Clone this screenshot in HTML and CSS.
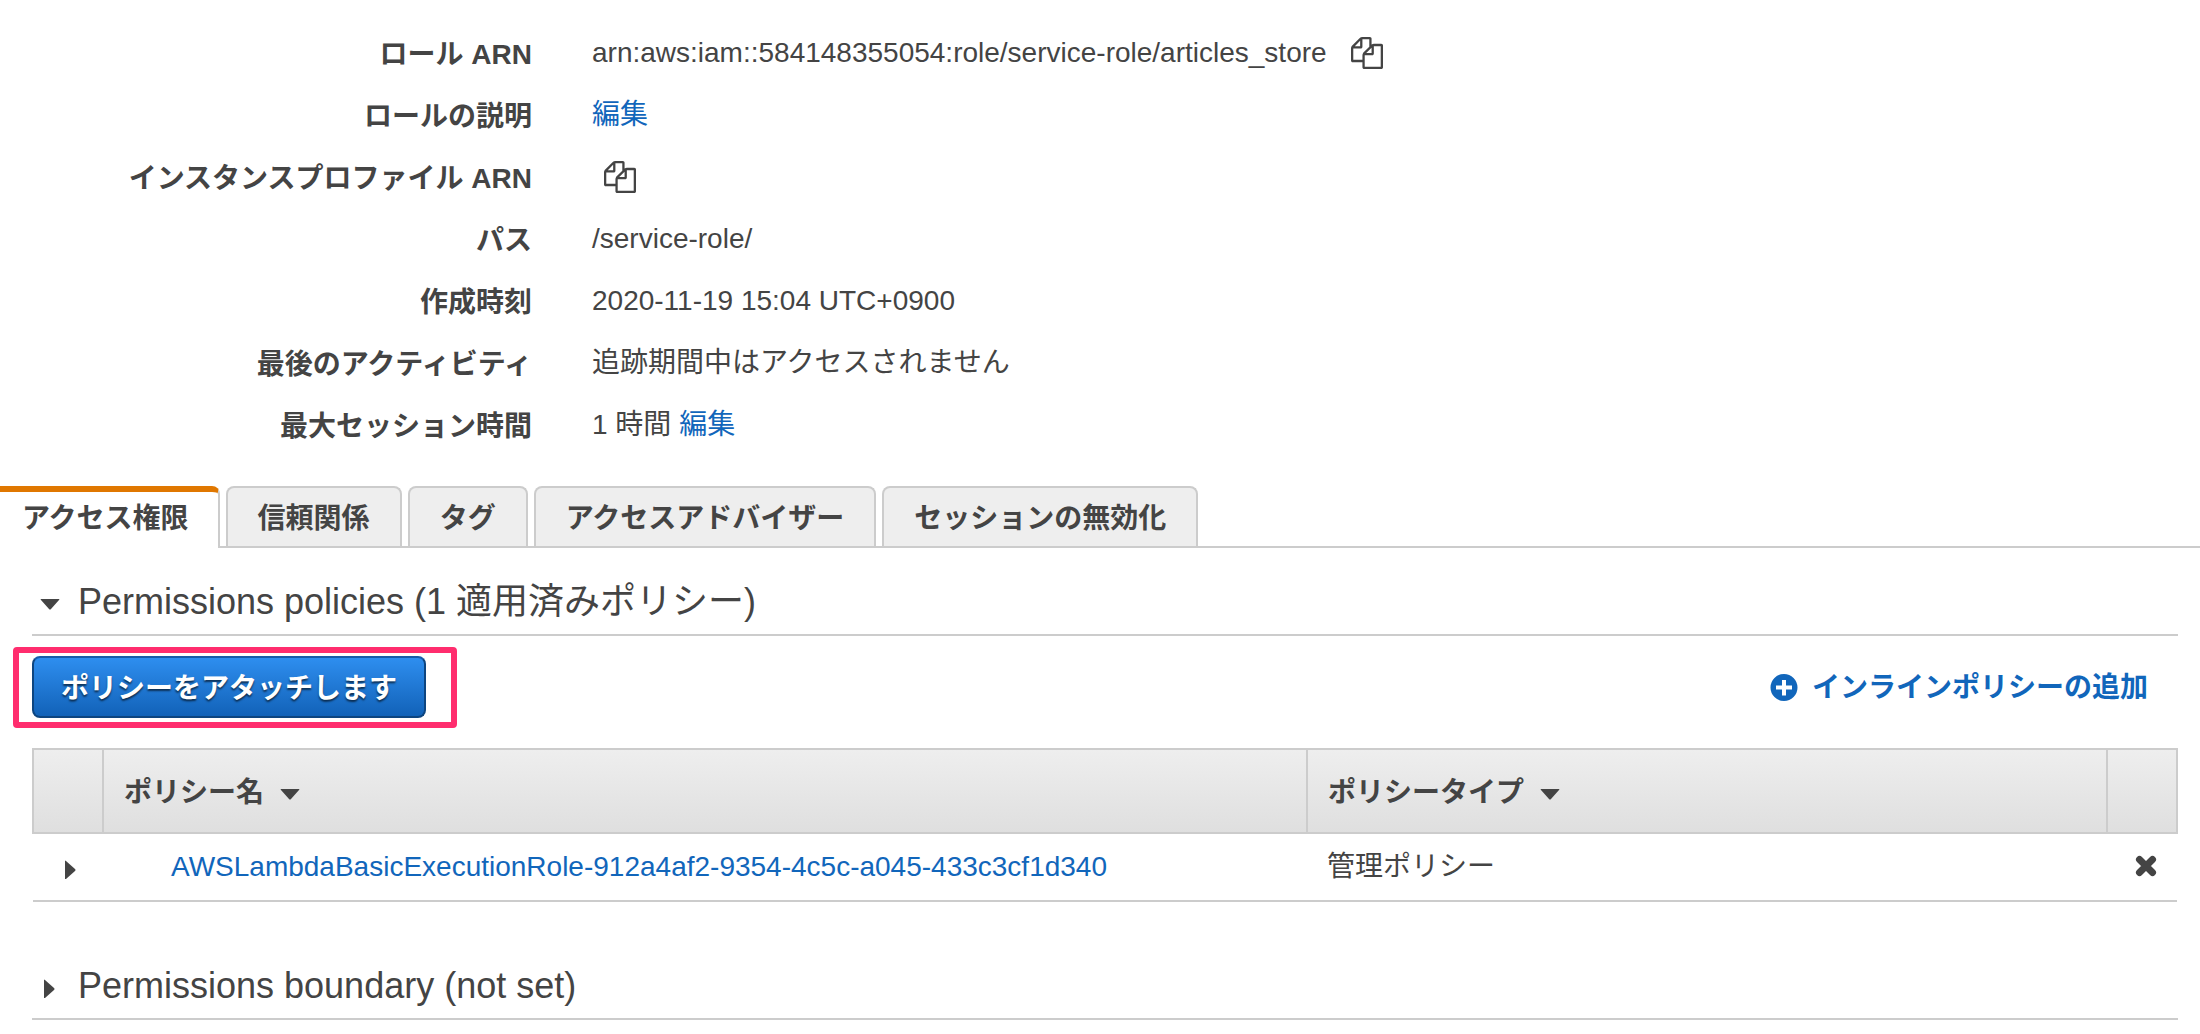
FILE: index.html
```html
<!DOCTYPE html>
<html lang="ja">
<head>
  <meta charset="UTF-8">
  <meta name="viewport" content="width=device-width, initial-scale=1.0">
  <title>IAM ロール</title>
  <link rel="stylesheet" href="styles.css">
</head>
<body>
  <!-- Shared icon shapes -->
  <svg class="icon-defs" aria-hidden="true">
    <symbol id="icon-copy" viewBox="0 0 1792 1792">
      <path d="M1696 384q40 0 68 28t28 68v1216q0 40-28 68t-68 28h-960q-40 0-68-28t-28-68v-288h-544q-40 0-68-28t-28-68v-672q0-40 20-88t48-76l408-408q28-28 76-48t88-20h416q40 0 68 28t28 68v328q68-40 128-40h416zm-544 213l-299 299h299v-299zm-640-384l-299 299h299v-299zm196 647l316-316v-416h-384v416q0 40-28 68t-68 28h-416v640h512v-256q0-40 20-88t48-76zm956 804v-1152h-384v416q0 40-28 68t-68 28h-416v640h896z"/>
    </symbol>
    <symbol id="icon-down" viewBox="0 0 20 20">
      <path d="M1 5h18q1 0 0 1l-8 9q-1 1-2 0l-8-9q-1-1 0-1z"/>
    </symbol>
    <symbol id="icon-right" viewBox="0 0 20 20">
      <path d="M4 2q0-1 1 0l9 8q1 1 0 2l-9 8q-1 1-1 0z"/>
    </symbol>
    <symbol id="icon-plus" viewBox="0 0 28 28">
      <path fill-rule="evenodd" d="M14 0a13.5 13.5 0 1 0 0 27a13.5 13.5 0 1 0 0-27zM12 6h4v5.500h6v4h-6v6h-4v-6h-6v-4h6z"/>
    </symbol>
    <symbol id="icon-close" viewBox="0 0 22 22">
      <path d="M4.500 4.500L17.500 17.500M17.500 4.500L4.500 17.500" stroke="currentColor" stroke-width="7" stroke-linecap="round"/>
    </symbol>
  </svg>

  <!-- Role summary -->
  <dl class="summary">
    <dt>ロール ARN</dt>
    <dd>arn:aws:iam::584148355054:role/service-role/articles_store
      <button class="icon-button" aria-label="コピー"><svg class="icon-copy"><use href="#icon-copy"/></svg></button>
    </dd>
    <dt>ロールの説明</dt>
    <dd><a href="#">編集</a></dd>
    <dt>インスタンスプロファイル ARN</dt>
    <dd><button class="icon-button" aria-label="コピー"><svg class="icon-copy"><use href="#icon-copy"/></svg></button></dd>
    <dt>パス</dt>
    <dd>/service-role/</dd>
    <dt>作成時刻</dt>
    <dd>2020-11-19 15:04 UTC+0900</dd>
    <dt>最後のアクティビティ</dt>
    <dd>追跡期間中はアクセスされません</dd>
    <dt>最大セッション時間</dt>
    <dd><span>1 時間 <a href="#">編集</a></span></dd>
  </dl>

  <!-- Tabs -->
  <div class="tabs" role="tablist">
    <button class="tab active" role="tab" aria-selected="true">アクセス権限</button>
    <button class="tab" role="tab">信頼関係</button>
    <button class="tab" role="tab">タグ</button>
    <button class="tab" role="tab">アクセスアドバイザー</button>
    <button class="tab" role="tab">セッションの無効化</button>
  </div>

  <main class="content">
    <details class="section" open>
      <summary><svg class="icon"><use class="when-open" href="#icon-down"/><use class="when-closed" href="#icon-right"/></svg>Permissions policies (1 適用済みポリシー)</summary>

      <div class="actions">
        <div class="highlight">
          <button class="primary">ポリシーをアタッチします</button>
        </div>
        <a class="add-inline" href="#"><svg class="icon-plus"><use href="#icon-plus"/></svg>インラインポリシーの追加</a>
      </div>

      <table class="policies">
        <thead>
          <tr>
            <th class="col-toggle"></th>
            <th class="col-name"><span class="sort">ポリシー名<svg class="icon"><use href="#icon-down"/></svg></span></th>
            <th class="col-type"><span class="sort">ポリシータイプ<svg class="icon"><use href="#icon-down"/></svg></span></th>
            <th class="col-remove"></th>
          </tr>
        </thead>
        <tbody>
          <tr>
            <td class="toggle"><button class="icon-button" aria-label="展開"><svg class="icon"><use href="#icon-right"/></svg></button></td>
            <td class="name"><a href="#">AWSLambdaBasicExecutionRole-912a4af2-9354-4c5c-a045-433c3cf1d340</a></td>
            <td>管理ポリシー</td>
            <td class="remove"><button class="icon-button" aria-label="デタッチ"><svg class="icon-close"><use href="#icon-close"/></svg></button></td>
          </tr>
        </tbody>
      </table>
    </details>

    <details class="section">
      <summary><svg class="icon"><use class="when-open" href="#icon-down"/><use class="when-closed" href="#icon-right"/></svg>Permissions boundary (not set)</summary>
    </details>
  </main>
</body>
</html>
```
FILE: styles.css
```css
* {
  box-sizing: border-box;
}
body {
  margin: 0;
  background-color: #fff;
  color: #444;
  font-family: "Liberation Sans", "Noto Sans CJK JP", sans-serif;
  font-size: 28px;
  line-height: 40px;
}
a {
  color: #1166bb;
  text-decoration: none;
}
a:hover {
  text-decoration: underline;
}
button {
  font: inherit;
  color: inherit;
  cursor: pointer;
}
svg {
  fill: currentColor;
}
.icon-defs {
  display: none;
}
.icon {
  width: 20px;
  height: 20px;
  flex: none;
}
.icon-button {
  display: flex;
  padding: 0;
  border: none;
  background: none;
}

/* Role summary */
.summary {
  display: grid;
  grid-template-columns: 532px 1fr;
  grid-auto-rows: 62px;
  column-gap: 60px;
  align-items: center;
  margin: 0;
  padding: 22px 0 30px;
}
.summary dt {
  padding-top: 3px;
  text-align: right;
  font-weight: bold;
}
.summary dd {
  display: flex;
  align-items: center;
  gap: 12px;
  margin: 0;
}
.summary .icon-button {
  margin-left: 12px;
}
.icon-copy {
  width: 32px;
  height: 32px;
}

/* Tabs */
.tabs {
  display: flex;
  gap: 6px;
  border-bottom: 2px solid #ccc;
}
.tab {
  height: 60px;
  padding: 3px 30px 0;
  border: 2px solid #ccc;
  border-bottom: none;
  border-radius: 8px 8px 0 0;
  background-color: #eee;
  font-weight: bold;
}
.tab.active {
  height: 62px;
  margin-bottom: -2px;
  padding: 0 29px 2px 22px;
  border-top: 6px solid #e07700;
  border-left: none;
  border-radius: 0 8px 0 0;
  background-color: #fff;
}

/* Sections */
.content {
  padding: 34px 22px 0 32px;
}
.section summary {
  display: flex;
  align-items: center;
  gap: 18px;
  padding: 0 0 12px 8px;
  border-bottom: 2px solid #ccc;
  font-size: 36px;
  cursor: pointer;
}
.section summary .icon {
  margin-top: 3px;
}
.section + .section {
  margin-top: 64px;
}
.section[open] .when-closed,
.section:not([open]) .when-open {
  display: none;
}
.actions {
  display: flex;
  justify-content: space-between;
  align-items: center;
  padding: 20px 30px 30px 0;
}
.highlight {
  position: relative;
}
.highlight::after {
  content: "";
  position: absolute;
  inset: -9px -31px -10px -19px;
  border: 6px solid #ff2d6e;
  border-radius: 4px;
  pointer-events: none;
}
.primary {
  display: block;
  height: 62px;
  padding: 3px 27px 0;
  border: 2px solid #0d4580;
  border-top-color: #155caa;
  border-radius: 8px;
  background: linear-gradient(#2e8eef, #1262b8);
  color: #fff;
  font-weight: bold;
  text-shadow: 0 2px 2px rgba(0, 0, 0, 0.6);
}
.add-inline {
  display: flex;
  align-items: center;
  gap: 14px;
  padding-top: 2px;
  font-weight: bold;
}
.icon-plus {
  width: 28px;
  height: 28px;
}

/* Policy table */
.policies {
  width: 100%;
  border-collapse: collapse;
  table-layout: fixed;
}
.policies th {
  height: 84px;
  padding: 3px 20px 0;
  border: 2px solid #ccc;
  background: linear-gradient(#eee, #dfdfdf);
  text-align: left;
}
.policies td {
  height: 68px;
  padding: 0 20px;
  border-bottom: 2px solid #ccc;
}
.policies .col-toggle,
.policies .col-remove {
  width: 70px;
}
.col-type {
  width: 800px;
}
.sort {
  display: flex;
  align-items: center;
  gap: 16px;
}
.sort .icon {
  margin-top: 2px;
}
.policies .toggle {
  padding: 3px 0 0 28px;
}
.policies .name {
  padding-left: 68px;
}
.policies .remove {
  padding: 0 0 3px 28px;
}
.icon-close {
  width: 22px;
  height: 22px;
}
```
